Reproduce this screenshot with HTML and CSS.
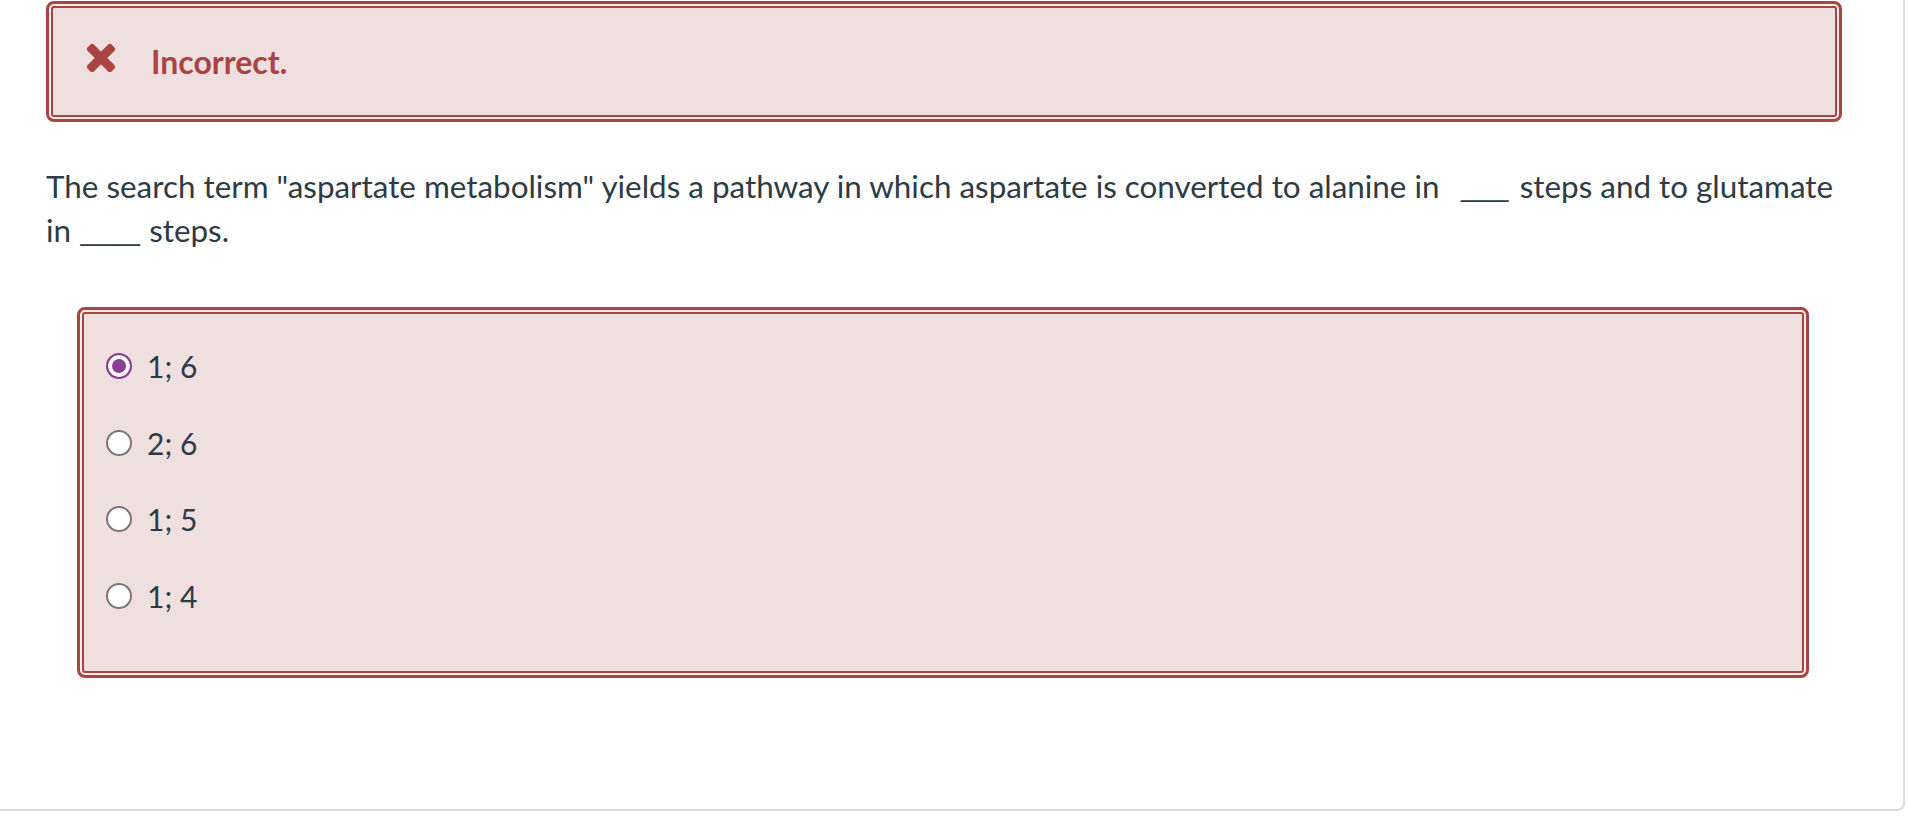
FILE: index.html
```html
<!DOCTYPE html>
<html>
<head>
	<title>Quiz Question</title>
	<meta charset="utf-8">
	<link rel="stylesheet" href="styles.css">
</head>
<body>

	<div class="card">

		<div class="feedback">
			<div class="feedback-inner">
				<svg class="icon-x" width="28" height="28" viewBox="0 0 28 28" aria-hidden="true">
					<rect x="9.5" y="-3" width="9" height="34" rx="2" transform="rotate(45 14 14)"/>
					<rect x="9.5" y="-3" width="9" height="34" rx="2" transform="rotate(-45 14 14)"/>
				</svg>
				<span class="feedback-text">Incorrect.</span>
			</div>
		</div>

		<p class="question-text">The search term "aspartate metabolism" yields a pathway in which aspartate is converted to alanine in <span class="blank blank-first">____</span> steps and to glutamate in <span class="blank">_____</span> steps.</p>

		<div class="answers">
			<div class="answers-inner">
				<label class="answer"><input type="radio" name="q1" class="radio" checked> 1; 6</label>
				<label class="answer"><input type="radio" name="q1" class="radio"> 2; 6</label>
				<label class="answer"><input type="radio" name="q1" class="radio"> 1; 5</label>
				<label class="answer"><input type="radio" name="q1" class="radio"> 1; 4</label>
			</div>
		</div>

	</div>

</body>
</html>
```

FILE: styles.css
```css
*,
*:before,
*:after {
	box-sizing: border-box;
}

body {
	margin: 0;
	background-color: #ffffff;
	font-family: Lato, "Open Sans", "Liberation Sans", sans-serif;
	color: #2d3b45;
}

.card {
	width: 1905px;
	height: 811px;
	padding-top: 1px;
	padding-left: 46px;
	background-color: #ffffff;
	border-right: 2px solid #dcdcdc;
	border-bottom: 2px solid #dcdcdc;
	border-bottom-right-radius: 8px;
}

/* feedback banner */

.feedback {
	width: 1796px;
	height: 121px;
	padding: 2px;
	border: 3px solid #a94442;
	border-radius: 8px;
	background-color: #f8eeee;
}

.feedback-inner {
	display: flex;
	align-items: center;
	height: 100%;
	padding-left: 34px;
	border: 2px solid #a94442;
	border-radius: 3px;
	background-color: #f0dfdf;
}

.icon-x {
	flex: none;
	margin-bottom: 8px;
	fill: #a94442;
}

.feedback-text {
	margin-left: 36px;
	font-size: 32px;
	font-weight: bold;
	color: #a94442;
}

/* question */

.question-text {
	width: 1796px;
	margin: 42px 0 0;
	font-size: 31.4px;
	line-height: 44px;
}

.blank {
	letter-spacing: -2.5px;
	margin-right: 2.5px;
}

.blank-first {
	margin-left: 12px;
	margin-right: 4.5px;
}

/* answers */

.answers {
	width: 1732px;
	height: 371px;
	margin: 55px 0 0 31px;
	padding: 2px;
	border: 3px solid #a94442;
	border-radius: 8px;
	background-color: #f8eeee;
}

.answers-inner {
	display: flex;
	flex-direction: column;
	height: 100%;
	padding: 14px 0 0 22px;
	border: 2px solid #a94442;
	border-radius: 3px;
	background-color: #f0dfdf;
}

.answer {
	display: flex;
	align-items: center;
	height: 76.5px;
	font-size: 30px;
	gap: 15px;
}

.radio {
	-webkit-appearance: none;
	appearance: none;
	flex: none;
	width: 26px;
	height: 26px;
	margin: 0;
	border: 2px solid #777777;
	border-radius: 50%;
	background-color: #ffffff;
}

.radio:checked {
	border-color: #8b3d91;
	background-color: #8b3d91;
	box-shadow: inset 0 0 0 4px #ffffff;
}
```
